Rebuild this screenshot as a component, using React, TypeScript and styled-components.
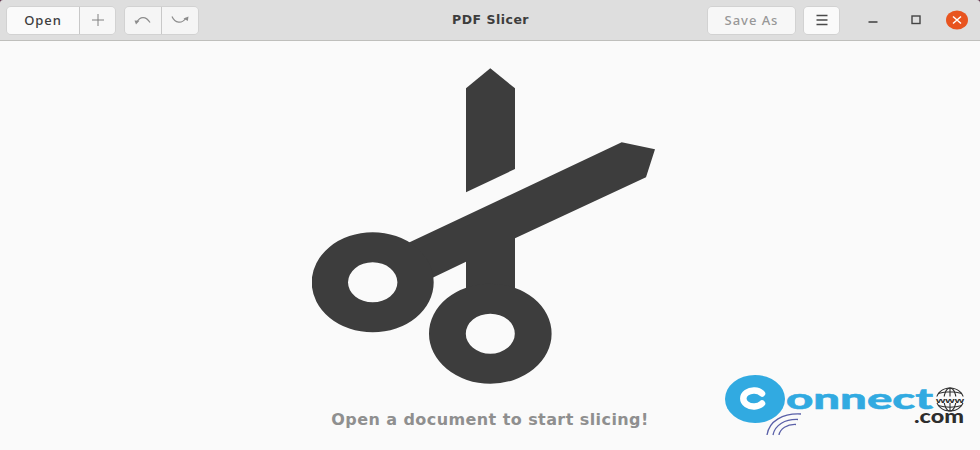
import React from "react";
import styled, { createGlobalStyle } from "styled-components";

const Global = createGlobalStyle`
  html, body { margin: 0; padding: 0; background: #fafafa; }
  #root { width: 980px; height: 450px; overflow: hidden; }
`;
const Win = styled.div`
  position: relative; width: 980px; height: 450px; display: flex; flex-direction: column;
  font-family: "Noto Sans", "Open Sans", sans-serif; background: #5b2a44; overflow: hidden;
`;
const Header = styled.header`
  height: 41px; flex: none; box-sizing: border-box; display: flex; align-items: center;
  padding: 0 12px 0 6px; background: #dedede; border-bottom: 1px solid #bfbfbc;
  border-radius: 3px 3px 0 0; position: relative;
`;
const Group = styled.div<{ $ml?: number }>`
  display: flex; height: 29px; margin-left: ${(p) => p.$ml ?? 0}px; border: 1px solid #d2d2d2;
  border-radius: 5px; overflow: hidden; box-sizing: border-box;
`;
const Btn = styled.div<{ $w: number; $bg?: string; $color?: string; $sep?: boolean }>`
  width: ${(p) => p.$w}px; display: flex; align-items: center; justify-content: center;
  box-sizing: border-box;
  background: ${(p) => p.$bg ?? "#fafafa"}; color: ${(p) => p.$color ?? "#3d3d3d"};
  font-size: 13px; font-weight: 500; letter-spacing: 0.95px;
  ${(p) => (p.$sep ? "border-right: 1px solid #c8c8c8;" : "")}
`;
const Title = styled.div`
  position: absolute; left: 1px; right: 0; top: 0; height: 39px; display: flex; align-items: center;
  justify-content: center; font-family: "DejaVu Sans", sans-serif; font-size: 12.5px; font-weight: 700;
  color: #3d3d3d; letter-spacing: 0.5px;
`;
const Spacer = styled.div` flex: 1; `;
const WinBtns = styled.div` display: flex; align-items: center; margin-left: 11px; `;
const WinBtn = styled.div<{ $w: number; $ml?: number }>`
  width: ${(p) => p.$w}px; margin-left: ${(p) => p.$ml ?? 0}px;
  display: flex; align-items: center; justify-content: center;
`;
const Main = styled.main`
  flex: 1; display: flex; flex-direction: column; align-items: center; background: #fafafa;
`;
const Art = styled.svg` width: 356px; height: 316px; margin-top: 27px; display: block; `;
const Hint = styled.div`
  margin-top: 25px; font-family: "DejaVu Sans", sans-serif; font-size: 16px; line-height: 22px;
  font-weight: 700; color: #8f8f8f; letter-spacing: 0.42px; white-space: nowrap;
`;
const Logo = styled.svg`
  position: absolute; left: 720px; top: 370px; width: 260px; height: 70px;
`;

const G = "#3d3d3d";
const B = "#31aae1";
export default function App() {
  return (
    <Win>
      <Global />
      <Header>
        <Group>
          <Btn $w={73} $sep>Open</Btn>
          <Btn $w={35} $bg="#f7f7f7">
            <svg width="14" height="14" viewBox="0 0 14 14"><path d="M7 1v12M1 7h12" stroke="#808080" strokeWidth="1" /></svg>
          </Btn>
        </Group>
        <Group $ml={8}>
          <Btn $w={37} $sep $bg="#f5f5f5">
            <svg width="18" height="10" viewBox="0 0 18 10" fill="none"><path d="M3 7C6 1 12 1 16 7.500" stroke="#8c8c8c" strokeWidth="1.200" /><path d="M.5 5.500l5 .2L2 9.500z" fill="#8c8c8c" /></svg>
          </Btn>
          <Btn $w={36} $bg="#f5f5f5">
            <svg width="18" height="10" viewBox="0 0 18 10" fill="none"><path d="M1 1.500C4 8.500 11 9 15 3" stroke="#8c8c8c" strokeWidth="1.200" /><path d="M17.500 1.500l-5 2 4.300 2.500z" fill="#8c8c8c" /></svg>
          </Btn>
        </Group>
        <Title>PDF Slicer</Title>
        <Spacer />
        <Group>
          <Btn $w={87} $color="#989898" $bg="#f7f7f7">Save As</Btn>
        </Group>
        <Group $ml={7}>
          <Btn $w={35}>
            <svg width="14" height="12" viewBox="0 0 14 12"><path d="M1.500 1.500h11M1.500 6h11M1.500 10.500h11" stroke="#4a4a4a" strokeWidth="1.300" /></svg>
          </Btn>
        </Group>
        <WinBtns>
          <WinBtn $w={43}>
            <svg width="12" height="12" viewBox="0 0 12 12"><path d="M1.500 8h9" stroke="#666" strokeWidth="2" /></svg>
          </WinBtn>
          <WinBtn $w={43}>
            <svg width="12" height="12" viewBox="0 0 12 12"><rect x="2" y="2" width="8" height="7.500" fill="none" stroke="#444" strokeWidth="1.400" /></svg>
          </WinBtn>
          <WinBtn $w={22} $ml={9}>
            <svg width="22" height="20" viewBox="0 0 22 20"><ellipse cx="11" cy="10" rx="11" ry="9.500" fill="#e8541f" /><path d="M7 6.500l8 7M15 6.500l-8 7" stroke="#fff" strokeWidth="1.500" /></svg>
          </WinBtn>
        </WinBtns>
      </Header>
      <Main>
        <Art viewBox="312 68 356 316">
          <path fill={G} d="M466 88.300L490.300 68.300L515 88.300V169L466 192.300Z" />
          <path fill={G} d="M621.700 142.300L655 149.300L646 177.300L515 238.300V295H466V261.700L430 279L408 243Z" />
          <path
            fill={G}
            fillRule="evenodd"
            d="M311.700 282.300a61 50 0 1 0 122 0a61 50 0 1 0 -122 0ZM348 282.300a24.700 20 0 1 1 49.400 0a24.700 20 0 1 1 -49.400 0Z"
          />
          <path
            fill={G}
            fillRule="evenodd"
            d="M429 333.700a61.300 50 0 1 0 122.600 0a61.300 50 0 1 0 -122.600 0ZM465.800 333.700a24.500 20 0 1 1 49 0a24.500 20 0 1 1 -49 0Z"
          />
        </Art>
        <Hint>Open a document to start slicing!</Hint>
      </Main>
      <Logo viewBox="720 370 260 70">
        <ellipse cx="755" cy="399" rx="30" ry="24" fill={B} />
        <path d="M762 393.500A10.500 8 0 1 0 762 403.500" fill="none" stroke="#fff" strokeWidth="6.500" strokeLinecap="round" />
        <text x="786" y="409" fontFamily="Lato, 'Noto Sans', sans-serif" fontWeight="900" fontSize="28" fill={B} stroke={B} strokeWidth="0.500" textLength="147" lengthAdjust="spacingAndGlyphs">onnect</text>
        <text x="914" y="423" fontFamily="Lato, 'Noto Sans', sans-serif" fontWeight="900" fontSize="19" fill="#2d2d2d" textLength="50" lengthAdjust="spacingAndGlyphs">.com</text>
        <g fill="none" stroke="#5a60a8" strokeWidth="1.300">
          <path d="M767 435C769 421 783 413 801 414" />
          <path d="M773 435C775 425 785 419 798 419.500" />
          <path d="M779 435C780 429 787 424 796 424.500" />
        </g>
        <g fill="none" stroke="#2d2d2d" strokeWidth="1.100">
          <ellipse cx="950" cy="399.500" rx="13.500" ry="11.500" />
          <ellipse cx="950" cy="399.500" rx="6" ry="11.500" />
          <path d="M950 388v23M938 393.500c7 -2 17 -2 24 0M938 405.500c7 2 17 2 24 0" />
        </g>
        <rect x="935" y="396.500" width="30" height="6.500" fill="#fafafa" />
        <text x="936" y="402.500" fontFamily="'Liberation Sans', sans-serif" fontWeight="700" fontSize="7" fill="#2d2d2d" textLength="28" lengthAdjust="spacingAndGlyphs">www</text>
      </Logo>
    </Win>
  );
}
